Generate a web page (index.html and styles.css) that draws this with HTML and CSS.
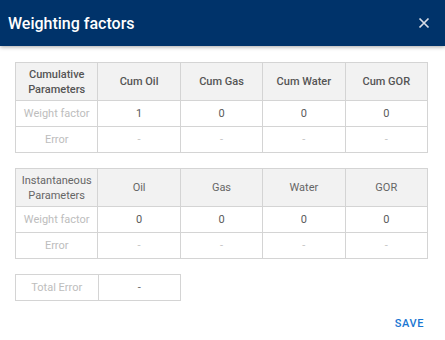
FILE: index.html
```html
<!DOCTYPE html>
<html lang="en">

<head>
    <meta charset="UTF-8">
    <title>Weighting factors</title>
    <link rel="stylesheet" href="styles.css">
</head>

<body>
    <div class="dialog">
        <div class="head">
            <span class="title">Weighting factors</span>
            <span class="close">
                <svg width="12" height="12" viewBox="0 0 12 12">
                    <path d="M1.5 1.5L10.5 10.5M10.5 1.5L1.5 10.5" stroke="#d8dde6" stroke-width="1.7" fill="none"/>
                </svg>
            </span>
        </div>
        <div class="body">
            <table class="grid">
                <tr>
                    <th>Cumulative Parameters</th>
                    <th>Cum Oil</th>
                    <th>Cum Gas</th>
                    <th>Cum Water</th>
                    <th>Cum GOR</th>
                </tr>
                <tr>
                    <td class="label">Weight factor</td>
                    <td class="val">1</td>
                    <td class="val">0</td>
                    <td class="val">0</td>
                    <td class="val">0</td>
                </tr>
                <tr>
                    <td class="label">Error</td>
                    <td class="dash">-</td>
                    <td class="dash">-</td>
                    <td class="dash">-</td>
                    <td class="dash">-</td>
                </tr>
            </table>
            <table class="grid light">
                <tr>
                    <th>Instantaneous Parameters</th>
                    <th>Oil</th>
                    <th>Gas</th>
                    <th>Water</th>
                    <th>GOR</th>
                </tr>
                <tr>
                    <td class="label">Weight factor</td>
                    <td class="val">0</td>
                    <td class="val">0</td>
                    <td class="val">0</td>
                    <td class="val">0</td>
                </tr>
                <tr>
                    <td class="label">Error</td>
                    <td class="dash">-</td>
                    <td class="dash">-</td>
                    <td class="dash">-</td>
                    <td class="dash">-</td>
                </tr>
            </table>
            <table class="grid total">
                <tr>
                    <td class="label">Total Error</td>
                    <td class="sum">-</td>
                </tr>
            </table>
        </div>
        <div class="foot">
            <span class="save">SAVE</span>
        </div>
    </div>
</body>

</html>
```

FILE: styles.css
```css
body {
    margin: 0;
    background-color: #fff;
    font-family: Roboto, "Liberation Sans", sans-serif;
}

.head {
    height: 46px;
    background-color: #00336a;
    display: flex;
    align-items: center;
    justify-content: space-between;
    padding: 0 15px 0 8px;
    box-shadow: 0 1px 4px rgba(0, 0, 0, 0.35);
}

.head .title {
    color: #fff;
    font-size: 16px;
    font-weight: 500;
}

.head .close {
    display: flex;
}

.body {
    padding: 16px 0 0 15px;
}

.grid {
    width: 413px;
    table-layout: fixed;
    border-collapse: collapse;
    margin-bottom: 15px;
    font-size: 11px;
}

.grid th,
.grid td {
    border: 1px solid #d4d4d4;
    text-align: center;
    padding: 0 4px;
}

.grid th {
    height: 37px;
    background-color: #f2f2f2;
    color: #555;
    font-weight: 500;
    line-height: 15px;
}

.grid.light th {
    font-weight: 400;
    color: #666;
}

.grid td {
    height: 25px;
}

.grid .label {
    color: #bdbdbd;
}

.grid .val {
    color: #5a5a5a;
}

.grid .dash {
    color: #c4c4c4;
}

.grid .sum {
    color: #666;
}

.grid.total {
    width: 166px;
}

.foot {
    display: flex;
    justify-content: flex-end;
    padding: 1px 21px 0 0;
}

.save {
    color: #1976d2;
    font-size: 11px;
    font-weight: 500;
    letter-spacing: 0.6px;
}
```
